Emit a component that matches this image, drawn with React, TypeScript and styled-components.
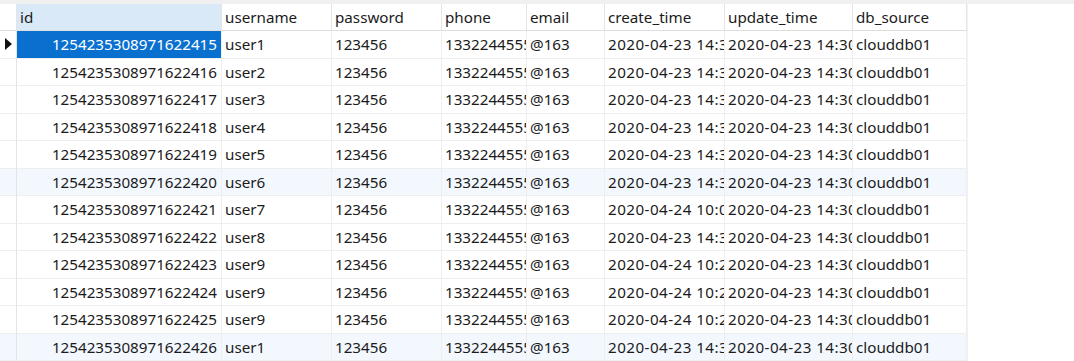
import styled, { createGlobalStyle } from 'styled-components';

const GlobalStyle = createGlobalStyle`
  html, body {
    margin: 0;
    padding: 0;
    background: #ffffff;
  }
  body {
    font-family: "Noto Sans", "Open Sans", Arial, sans-serif;
    font-size: 15.2px;
    color: #1b1b1b;
  }
`;

interface Column {
  key: string;
  title: string;
  width: number;
  align?: 'left' | 'right';
  wide?: boolean;
}

const columns: Column[] = [
  { key: 'id', title: 'id', width: 205, align: 'right' },
  { key: 'username', title: 'username', width: 110 },
  { key: 'password', title: 'password', width: 110 },
  { key: 'phone', title: 'phone', width: 85 },
  { key: 'email', title: 'email', width: 78 },
  { key: 'create_time', title: 'create_time', width: 120, wide: true },
  { key: 'update_time', title: 'update_time', width: 128, wide: true },
  { key: 'db_source', title: 'db_source', width: 114 },
];

type Row = Record<string, string>;

const makeRow = (n: number, user: string, created: string): Row => ({
  id: `12542353089716224${n}`,
  username: user,
  password: '123456',
  phone: '13322445555',
  email: '@163',
  create_time: created,
  update_time: '2020-04-23 14:30:21',
  db_source: 'clouddb01',
});

const A = '2020-04-23 14:30:21';
const B = '2020-04-24 10:05:12';
const C = '2020-04-24 10:22:40';

const rows: Row[] = [
  makeRow(15, 'user1', A),
  makeRow(16, 'user2', A),
  makeRow(17, 'user3', A),
  makeRow(18, 'user4', A),
  makeRow(19, 'user5', A),
  makeRow(20, 'user6', A),
  makeRow(21, 'user7', B),
  makeRow(22, 'user8', A),
  makeRow(23, 'user9', C),
  makeRow(24, 'user9', C),
  makeRow(25, 'user9', C),
  makeRow(26, 'user1', A),
];

// rows that navicat paints with the faint blue tint
const tinted = [5, 11];

const App = () => {
  return (
    <>
      <GlobalStyle />
      <TopStrip />
      <Grid>
        <HeaderRow>
          <IndicatorCell $header />
          {columns.map((col) => (
            <HeaderCell key={col.key} $width={col.width} $active={col.key === 'id'}>
              {col.title}
            </HeaderCell>
          ))}
          <Filler />
        </HeaderRow>
        {rows.map((row, rowIndex) => (
          <DataRow key={row.id} $tinted={tinted.includes(rowIndex)}>
            <IndicatorCell>
              {rowIndex === 0 && <Caret />}
            </IndicatorCell>
            {columns.map((col) => (
              <DataCell
                key={col.key}
                $width={col.width}
                $align={col.align ?? 'left'}
                $wide={!!col.wide}
                $selected={rowIndex === 0 && col.key === 'id'}
              >
                {row[col.key]}
              </DataCell>
            ))}
            <Filler />
          </DataRow>
        ))}
      </Grid>
    </>
  );
};

const TopStrip = styled.div`
  height: 4px;
  background: #f0f0f0;
`;

const Grid = styled.div`
  display: flex;
  flex-direction: column;
`;

const HeaderRow = styled.div`
  display: flex;
  height: 27px;
`;

const DataRow = styled.div<{ $tinted: boolean }>`
  display: flex;
  height: 27.5px;
  & > div:not(:last-child) {
    background-color: ${(p) => (p.$tinted ? '#f3f8fe' : '#ffffff')};
  }
`;

const IndicatorCell = styled.div<{ $header?: boolean }>`
  box-sizing: border-box;
  width: 17px;
  flex: none;
  display: flex;
  align-items: center;
  padding-left: 5px;
  border-right: 1px solid #e4e4e4;
  border-bottom: 1px solid ${(p) => (p.$header ? '#dedede' : '#eeeeee')};
  background: #ffffff;
`;

const Caret = styled.span`
  width: 0;
  height: 0;
  border-top: 6px solid transparent;
  border-bottom: 6px solid transparent;
  border-left: 7px solid #111111;
`;

const HeaderCell = styled.div<{ $width: number; $active: boolean }>`
  box-sizing: border-box;
  width: ${(p) => p.$width}px;
  flex: none;
  display: flex;
  align-items: center;
  padding: 0 3px;
  white-space: nowrap;
  overflow: hidden;
  background: ${(p) => (p.$active ? '#d9e9f8' : '#ffffff')};
  border-right: 1px solid #e4e4e4;
  border-bottom: 1px solid #dedede;
`;

const DataCell = styled.div<{
  $width: number;
  $align: 'left' | 'right';
  $wide: boolean;
  $selected: boolean;
}>`
  box-sizing: border-box;
  width: ${(p) => p.$width}px;
  flex: none;
  display: flex;
  align-items: center;
  justify-content: ${(p) => (p.$align === 'right' ? 'flex-end' : 'flex-start')};
  padding: 0 ${(p) => (p.$align === 'right' ? '4px' : '0')} 0 3px;
  white-space: nowrap;
  overflow: hidden;
  letter-spacing: ${(p) => (p.$wide ? '0.45px' : 'normal')};
  border-right: 1px solid #eeeeee;
  border-bottom: 1px solid #eeeeee;
  ${(p) => p.$selected && 'background-color: #0a70d0 !important; color: #ffffff;'}
`;

const Filler = styled.div`
  flex: 1;
  border-left: 1px solid #f2f2f2;
  background: #ffffff;
`;

export default App;
